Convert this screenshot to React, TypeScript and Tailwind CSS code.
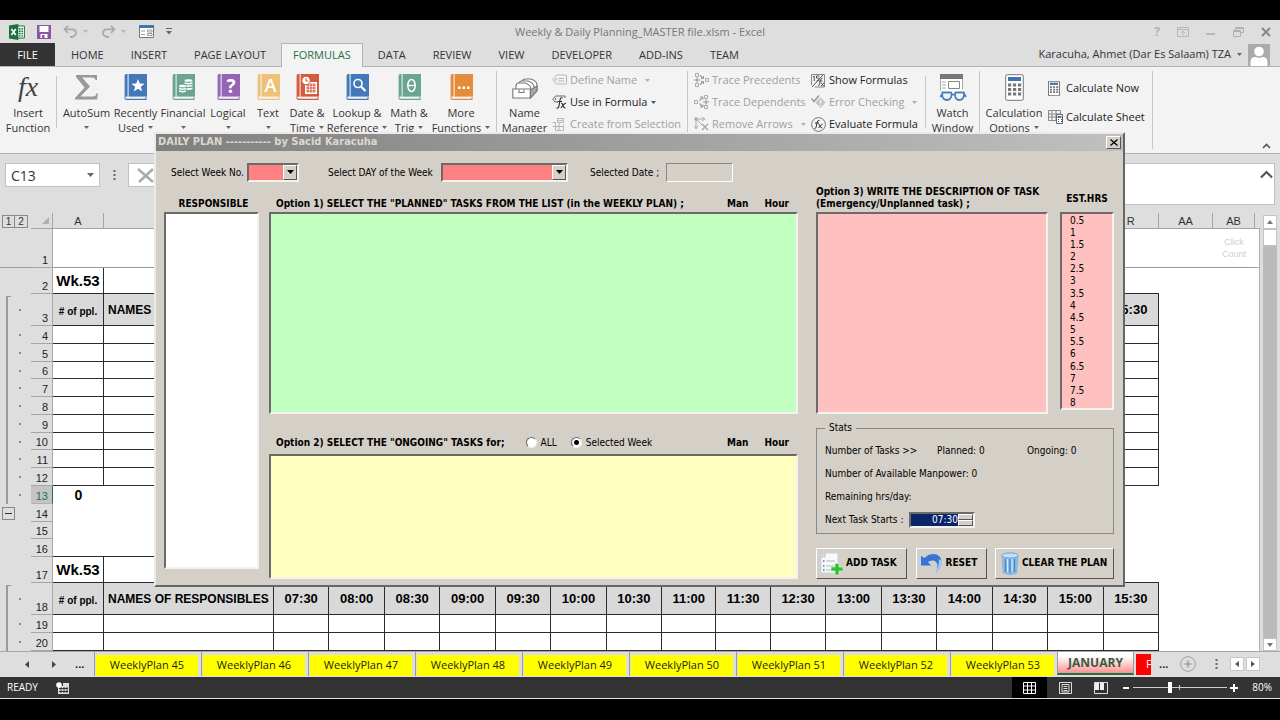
import React from 'react';

const FONT_UI = "font-['Open_Sans','Noto_Sans',sans-serif]";
const FONT_FORM = "font-['DejaVu_Sans_Condensed','DejaVu_Sans',sans-serif]";
const FONT_SHEET = "font-['Liberation_Sans',Arial,sans-serif]";

const TIMES = [
  '07:30', '08:00', '08:30', '09:00', '09:30', '10:00', '10:30', '11:00',
  '11:30', '12:30', '13:00', '13:30', '14:00', '14:30', '15:00', '15:30',
];
const TIME_COLUMNS = 'CDEFGHIJKLMNOPQR'.split('');
const HOURS = ['0.5', '1', '1.5', '2', '2.5', '3', '3.5', '4', '4.5', '5', '5.5', '6', '6.5', '7', '7.5', '8'];
const RIBBON_TABS = ['HOME', 'INSERT', 'PAGE LAYOUT', 'FORMULAS', 'DATA', 'REVIEW', 'VIEW', 'DEVELOPER', 'ADD-INS', 'TEAM'];
const SHEET_TABS = [45, 46, 47, 48, 49, 50, 51, 52, 53];

type RowKind = 'top' | 'week' | 'head' | 'body' | 'total' | 'blank' | 'last';
type SheetRow = { n: number; kind: RowKind; height: string; outline?: 'start' | 'line' | 'end' };

const ROWS: SheetRow[] = [
  { n: 1, kind: 'top', height: 'h-[39px]' },
  { n: 2, kind: 'week', height: 'h-[26px]' },
  { n: 3, kind: 'head', height: 'h-[32px]', outline: 'start' },
  { n: 4, kind: 'body', height: 'h-[18px]', outline: 'line' },
  { n: 5, kind: 'body', height: 'h-[18px]', outline: 'line' },
  { n: 6, kind: 'body', height: 'h-[17px]', outline: 'line' },
  { n: 7, kind: 'body', height: 'h-[18px]', outline: 'line' },
  { n: 8, kind: 'body', height: 'h-[18px]', outline: 'line' },
  { n: 9, kind: 'body', height: 'h-[18px]', outline: 'line' },
  { n: 10, kind: 'body', height: 'h-[17px]', outline: 'line' },
  { n: 11, kind: 'body', height: 'h-[18px]', outline: 'line' },
  { n: 12, kind: 'body', height: 'h-[18px]', outline: 'line' },
  { n: 13, kind: 'total', height: 'h-[18px]', outline: 'line' },
  { n: 14, kind: 'blank', height: 'h-[18px]', outline: 'end' },
  { n: 15, kind: 'blank', height: 'h-[17px]' },
  { n: 16, kind: 'last', height: 'h-[18px]' },
  { n: 17, kind: 'week', height: 'h-[26px]' },
  { n: 18, kind: 'head', height: 'h-[32px]', outline: 'start' },
  { n: 19, kind: 'body', height: 'h-[18px]', outline: 'line' },
  { n: 20, kind: 'body', height: 'h-[18px]', outline: 'line' },
];

/* ---------- icons ---------- */

function Caret({ className = 'fill-[#666]' }: { className?: string }) {
  return (
    <svg width="5" height="3" viewBox="0 0 5 3" className={`inline-block ${className}`} aria-hidden="true">
      <path d="M0 0h5L2.5 3z" />
    </svg>
  );
}

function BookIcon({ color, children }: { color: string; children: React.ReactNode }) {
  return (
    <svg width="23" height="26" viewBox="0 0 23 26" aria-hidden="true">
      <path d="M2 0h1.6v22.6H2.6Q1 22.8.6 24V1.6Q.8.2 2 0z" fill={color} />
      <path d="M4.6 0H23v22.6H4.6z" fill={color} />
      <path d="M.7 23.6Q1 25.4 2.8 25.4H22V23" fill="none" stroke={color} strokeWidth="1.1" />
      {children}
    </svg>
  );
}

function ExcelIcon() {
  return (
    <svg width="16" height="16" viewBox="0 0 16 16" aria-hidden="true">
      <path d="M8 2h7.4v12H8z" fill="#fff" stroke="#1e7145" />
      <path d="M10 4h1.6v1.5H10zM12.4 4H14v1.5h-1.6zM10 6.4h1.6v1.5H10zM12.4 6.4H14v1.5h-1.6zM10 8.8h1.6v1.5H10zM12.4 8.8H14v1.5h-1.6zM10 11.2h1.6v1.4H10zM12.4 11.2H14v1.4h-1.6z" fill="#1e7145" />
      <path d="M0 1.6 9.4 0v16L0 14.4z" fill="#1e7145" />
      <path d="m2.4 5 4.4 6M6.8 5l-4.4 6" stroke="#fff" strokeWidth="1.6" />
    </svg>
  );
}

function NameManagerIcon() {
  return (
    <svg width="26" height="21" viewBox="0 0 26 21" fill="#fff" stroke="#777" strokeWidth="1.1" aria-hidden="true">
      <path d="M10 8V5q0-4 4-4h5q6 2 6 6v5l-5 5z" />
      <path d="M7 9V6q0-3 3-3h6q6 2 6 6v6l-3 3z" />
      <path d="M4 11V8q0-3 3-3h6q6 2 6 6v3" />
      <path d="M.8 11h17.6v9H.8z" />
      <path d="M18.4 20 25 13V8l-6.600 4z" fill="#aaa" />
      <path d="M7 11.5v3h5v-3" fill="none" />
    </svg>
  );
}

function WatchIcon() {
  return (
    <svg width="28" height="28" viewBox="0 0 28 28" fill="none" aria-hidden="true">
      <path d="M1.5.5h22v16h-22z" fill="#fff" stroke="#aaa" />
      <path d="M1 0h23v5H1z" fill="#777" />
      <path d="M9.5 7.5h11v7h-11z" stroke="#888" />
      <path d="M3 8h4M3 11h4M3 14h4" stroke="#aaa" />
      <path d="M2 18h10l2 2 2-2h10" stroke="#fff" strokeWidth="5" />
      <path d="M3.4 18.5h8.400q1 0 .8 2-.4 5.5-4.8 5.5t-4.6-5.5zM16.4 18.5h8.4l.2 2q-.4 5.5-4.6 5.5T16 20.5zM12.6 20.6h3.2M3.4 19.5 1.4 23M25 19.5l2 3.5" stroke="#4a7ebb" strokeWidth="1.8" />
    </svg>
  );
}

function CalculatorIcon({ large = false }: { large?: boolean }) {
  return (
    <svg width={large ? 19 : 12} height={large ? 27 : 15} viewBox="0 0 19 27" preserveAspectRatio="none" aria-hidden="true">
      <rect x=".7" y=".7" width="17.6" height="25.6" rx="1.5" fill="#fff" stroke="#777" strokeWidth={large ? 1 : 1.7} />
      <path d="M3 3h13v4H3z" fill="#4472ac" />
      <path d="M3 9.5h3.2v3H3zm5 0h3.2v3H8zm5 0h3.2v3H13zM3 14h3.2v3H3zm5 0h3.2v3H8zm5 0h3.2v3H13zM3 18.5h3.2v3H3zm5 0h3.2v3H8zm5 0h3.2v3H13z" fill="#777" />
    </svg>
  );
}

function CalcSheetIcon() {
  return (
    <svg width="15" height="14" viewBox="0 0 15 14" fill="none" aria-hidden="true">
      <path d="M.5.5h12v10H.5zM.5 4h12M.5 7h12M4 .5v10M8 .5v10" stroke="#888" />
      <path d="M8.5 4.5h6v9h-6z" fill="#fff" stroke="#666" />
      <path d="M9.5 6h4v2h-4z" fill="#4472ac" />
      <path d="M10 9.5h1m2 0h1m-4 2h1m2 0h1" stroke="#555" />
    </svg>
  );
}

function TagIcon() {
  return (
    <svg width="15" height="12" viewBox="0 0 15 12" fill="none" stroke="#b4b4b4" aria-hidden="true">
      <path d="M4.5 1h9q1 0 1 1v7q0 1-1 1h-9L.7 5.5zM6.5 4.500H12M6.5 7H12" />
      <circle cx="4" cy="5.5" r=".8" />
    </svg>
  );
}

function TagFxIcon() {
  return (
    <svg width="15" height="14" viewBox="0 0 15 14" fill="none" stroke="#666" aria-hidden="true">
      <path d="M6 7H3L.7 4.2 3.500 1H13v2" />
      <circle cx="3.5" cy="4" r=".6" />
      <path d="M10.5 3q-2-1-2.500 2l-1 6q-.5 2.500-2.500 2M5.5 6.500H10M9 8q1.500 0 2 2.500t2.500 2.500M14 8q-2 .5-5 5" strokeWidth="1.2" stroke="#333" />
    </svg>
  );
}

function SelectionIcon() {
  return (
    <svg width="14" height="13" viewBox="0 0 14 13" fill="none" stroke="#b4b4b4" aria-hidden="true">
      <path d="M5.5.5h6v4h-6zM.5 4.5h3v8h8v-6M.5 8.500h11M7 5v7.500M6.500 2.500h4" />
    </svg>
  );
}

function TracePrecedentsIcon() {
  return (
    <svg width="15" height="14" viewBox="0 0 15 14" fill="none" stroke="#aaa" aria-hidden="true">
      <path d="M1.5.5h3v3h-3zM1.5 10.5h3v3h-3zM11.500 5.500h3v3h-3z" />
      <path d="M0 7h6M3 4.500v5M6 2.500l3 2.500M6 11.500l3-2.500" stroke="#999" strokeWidth="1.2" />
      <path d="M9.500 3v2.500H7M9.500 11V8.500H7" stroke="#999" />
    </svg>
  );
}

function TraceDependentsIcon() {
  return (
    <svg width="15" height="14" viewBox="0 0 15 14" fill="none" stroke="#aaa" aria-hidden="true">
      <path d="M.5 5.500h3v3h-3zM10.500.500h3v3h-3zM10.500 10.500h3v3h-3z" />
      <path d="M9 7h6M12 4.500v5M5.500 5.500l3-3M5.500 8.500l3 3" stroke="#999" strokeWidth="1.2" />
      <path d="M6 2h3v2.500M6 12h3V9.500" stroke="#999" />
    </svg>
  );
}

function RemoveArrowsIcon() {
  return (
    <svg width="15" height="14" viewBox="0 0 15 14" fill="none" stroke="#aaa" aria-hidden="true">
      <path d="M2 2h8M2 2v9M2 2l6 6M8 0l3 2-3 2M.5 9 2 12l2-3" />
      <circle cx="2" cy="2" r="1.3" fill="#aaa" />
      <path d="m8 7 6 6M14 7l-6 6" strokeWidth="1.5" />
    </svg>
  );
}

function ShowFormulasIcon() {
  return (
    <svg width="15" height="15" viewBox="0 0 15 15" fill="none" stroke="#555" aria-hidden="true">
      <path d="M.5 12V1.5h13V14H4" stroke="#888" />
      <path d="M2 4l1.2-1v5M8.5 3h-3v2q2.500-.5 2.500 1.200T5.500 8M1 14 12 2M11.500 5.500q-1.500-.5-2 1.500l-1 4q-.5 2-1.500 1.500M8 8h3.500M10 9.500l3 4M13 9.500l-3 4" />
    </svg>
  );
}

function ErrorCheckIcon() {
  return (
    <svg width="15" height="14" viewBox="0 0 15 14" aria-hidden="true">
      <path d="M9.5 2.500 14.5 7.500 9.5 13 4.500 7.500z" fill="#c4c4c4" />
      <path d="M9.5 5v3.500M9.5 10v1.200" stroke="#fff" strokeWidth="1.4" />
      <path d="m.5 3.500 2.500 3L8 .5" fill="none" stroke="#999" strokeWidth="1.5" />
    </svg>
  );
}

function EvaluateIcon() {
  return (
    <svg width="15" height="15" viewBox="0 0 15 15" fill="none" stroke="#333" aria-hidden="true">
      <circle cx="7.5" cy="7.5" r="6.9" stroke="#777" />
      <path d="M8.5 3.500q-1.800-.5-2.300 1.500l-1 5q-.4 1.700-1.700 1.500M4 6h4M7.500 7q1 0 1.500 2t2.300 2M11.500 7q-1.500.5-4 4" />
    </svg>
  );
}

function PersonIcon() {
  return (
    <svg width="22" height="22" viewBox="0 0 22 22" aria-hidden="true">
      <path d="M0 0h22v22H0z" fill="#ababab" />
      <circle cx="11" cy="7.5" r="4.8" fill="#fff" />
      <path d="M2.5 22v-4q0-5 5-5l3.500 1 3.500-1q5 0 5 5v4z" fill="#fff" />
    </svg>
  );
}

/* ---------- ribbon ---------- */

function BigButton({ width, icon, lines, caret = false }: { width: string; icon: React.ReactNode; lines: string[]; caret?: boolean }) {
  return (
    <button type="button" className={`${width} flex shrink-0 flex-col items-center whitespace-nowrap leading-[15px]`}>
      <span className="flex h-[31px] items-start justify-center">{icon}</span>
      <span>{lines[0]}</span>
      <span className="flex h-[15px] items-center gap-1">
        {lines[1]}
        {caret && <Caret />}
      </span>
    </button>
  );
}

function SmallButton({ icon, label, muted = false, caret = false }: { icon: React.ReactNode; label: string; muted?: boolean; caret?: boolean }) {
  return (
    <button type="button" className={`flex h-[18px] items-center whitespace-nowrap ${muted ? 'text-[#a0a0a0]' : 'text-[#222]'}`}>
      <span className="flex w-[18px] shrink-0 items-center">{icon}</span>
      {label}
      {caret && <span className={`flex ${muted ? 'ml-2' : 'ml-1'}`}><Caret className={muted ? 'fill-[#b0b0b0]' : 'fill-[#555]'} /></span>}
    </button>
  );
}

function Divider({ tall = false }: { tall?: boolean }) {
  return <div className={`w-px shrink-0 bg-[#c6c6c6] ${tall ? 'h-[78px]' : 'mt-[2px] h-[52px]'}`} />;
}

function TitleBar() {
  return (
    <header className="flex h-[23px] items-center bg-[#dedede] pl-[9px] pr-[9px] text-[#777]">
      <div className="flex flex-1 items-center">
        <ExcelIcon />
        <button type="button" aria-label="Save" className="ml-3">
          <svg width="14" height="14" viewBox="0 0 14 14" aria-hidden="true">
            <path d="M0 0h14v14H0z" fill="#8659a5" />
            <path d="M2.5 1h9v6h-9zM3.5 9h7v4h-7z" fill="#fff" />
            <path d="M5 10h2.5v3H5z" fill="#8659a5" />
          </svg>
        </button>
        <button type="button" aria-label="Undo" className="ml-3 flex items-center gap-[5px]">
          <svg width="15" height="13" viewBox="0 0 15 13" fill="none" stroke="#aaa" strokeWidth="1.8" aria-hidden="true">
            <path d="M5 .8 1.5 4.300 5 7.800M1.500 4.300H9q4 .2 4 3.500T9 12H7" />
          </svg>
          <Caret className="fill-[#b5b5b5]" />
        </button>
        <button type="button" aria-label="Redo" className="ml-[13px] flex items-center gap-[5px]">
          <svg width="15" height="13" viewBox="0 0 15 13" fill="none" stroke="#aaa" strokeWidth="1.8" aria-hidden="true">
            <path d="m10 .8 3.500 3.500L10 7.800M13.500 4.300H6q-4 .2-4 3.500T6 12h2" />
          </svg>
          <Caret className="fill-[#b5b5b5]" />
        </button>
        <button type="button" aria-label="Form" className="ml-[13px]">
          <svg width="15" height="13" viewBox="0 0 15 13" aria-hidden="true">
            <path d="M.5.5h14v12H.5z" fill="#fff" stroke="#777" />
            <path d="M0 0h15v3H0z" fill="#4472ac" />
            <path d="M2 6h4M2 9.500h4M8.500 5h4.500v2H8.500zM8.500 8.500h4.500v2H8.500z" fill="none" stroke="#999" />
          </svg>
        </button>
        <button type="button" aria-label="Customize toolbar" className="ml-3">
          <svg width="6" height="7" viewBox="0 0 6 7" fill="#666" aria-hidden="true">
            <path d="M0 0h6v1H0zM0 3h6L3 6.500z" />
          </svg>
        </button>
      </div>
      <h1 className="whitespace-nowrap pt-px text-[11px]">Weekly &amp; Daily Planning_MASTER file.xlsm - Excel</h1>
      <div className="flex flex-1 items-center justify-end gap-[17px] text-[#b0b0b0]">
        <button type="button" aria-label="Help" className="text-[12px] font-bold leading-4">?</button>
        <button type="button" aria-label="Ribbon display options">
          <svg width="12" height="10" viewBox="0 0 12 10" fill="none" stroke="#b8b8b8" aria-hidden="true">
            <path d="M.5.5h11v9H.5zM.5 2.500h11M6 8.500v-4M4 6l2-2 2 2" />
          </svg>
        </button>
        <button type="button" aria-label="Minimize">
          <svg width="10" height="10" viewBox="0 0 10 10" aria-hidden="true"><path d="M0 6h9v2H0z" fill="#b8b8b8" /></svg>
        </button>
        <button type="button" aria-label="Restore">
          <svg width="11" height="10" viewBox="0 0 11 10" fill="none" stroke="#b0b0b0" aria-hidden="true">
            <path d="M2.5 3V.5h8v5H8M.5 3.500h7v6h-7zM.5 4.500h7M2.500 1.500h8" />
          </svg>
        </button>
        <button type="button" aria-label="Close">
          <svg width="10" height="10" viewBox="0 0 10 10" stroke="#888" strokeWidth="2" aria-hidden="true"><path d="m1 1 8 8M9 1 1 9" /></svg>
        </button>
      </div>
    </header>
  );
}

function RibbonTabs() {
  return (
    <nav className="flex h-6 items-stretch border-b border-[#b4b4b4] bg-[#dedede] text-[11px] text-[#333]">
      <button type="button" className="mr-1 w-[55px] bg-[#333] pt-px text-white">FILE</button>
      <div className="flex gap-[3px]">
        {RIBBON_TABS.map((tab) => (
          <button
            type="button"
            key={tab}
            className={
              tab === 'FORMULAS'
                ? '-mb-px whitespace-nowrap border border-b-0 border-[#b4b4b4] bg-[#f3f3f3] px-[11px] text-[#1e7145]'
                : 'whitespace-nowrap px-3 pt-[2px]'
            }
          >
            {tab}
          </button>
        ))}
      </div>
      <div className="ml-auto flex items-center gap-[6px] whitespace-nowrap pr-[10px]">
        <span>Karacuha, Ahmet (Dar Es Salaam) TZA</span>
        <Caret />
        <PersonIcon />
      </div>
    </nav>
  );
}

function Ribbon() {
  return (
    <section className="flex h-[87px] items-start border-b border-[#b4b4b4] bg-[#f3f3f3] pt-1 text-[11px] text-[#333]">
      <div className="flex pt-[3px]">
        <BigButton width="w-[56px]" lines={['Insert', 'Function']} icon={<span className="font-['Liberation_Serif',serif] text-[28px] italic leading-[26px] text-[#444]">fx</span>} />
        <Divider />
        <div className="w-[5px]" />
        <BigButton width="w-[49px]" caret lines={['AutoSum']} icon={
          <svg width="23" height="26" viewBox="0 0 23 26" aria-hidden="true">
            <path d="M1 1h21v5h-1.500Q20 3.500 17 3.500H7l8 9-9.500 10H18q3 0 3.500-3H23l-1 6H0v-1.500L9.500 13.500 1 3z" fill="#999" />
          </svg>
        } />
        <BigButton width="w-[49px]" caret lines={['Recently', 'Used']} icon={
          <BookIcon color="#4479b8"><path d="m14 5 1.800 4.500 4.800.2-3.800 3 1.400 4.700L14 14.700l-4.200 2.700 1.400-4.700-3.800-3 4.800-.2z" fill="#fff" /></BookIcon>
        } />
        <BigButton width="w-[46px]" caret lines={['Financial']} icon={
          <BookIcon color="#6ba591">
            <g fill="#fff">
              <ellipse cx="16.5" cy="6.5" rx="4" ry="1.3" />
              <path d="M12.500 8q4 2 8 0v1.500q-4 2-8 0zM14.500 11q3 1 6-.5V12q-3 1.500-6 .8zM14.500 14q3 .8 6-.5V15q-3 1.500-6 .8z" />
              <ellipse cx="10.5" cy="12" rx="3.5" ry="1.3" />
              <path d="M7 13.500q3.500 2 7 0V15q-3.500 2-7 0zM7 16q3.500 2 7 0v1.500q-3.500 2-7 0z" />
            </g>
          </BookIcon>
        } />
        <BigButton width="w-[44px]" caret lines={['Logical']} icon={
          <BookIcon color="#9564b5"><text x="14" y="18.5" fontSize="19" fontWeight="700" fill="#fff" textAnchor="middle">?</text></BookIcon>
        } />
        <BigButton width="w-[36px]" caret lines={['Text']} icon={
          <BookIcon color="#eec177"><text x="13.5" y="18" fontSize="18" fontWeight="600" fill="#fff" textAnchor="middle">A</text></BookIcon>
        } />
        <BigButton width="w-[42px]" caret lines={['Date &', 'Time']} icon={
          <BookIcon color="#d35b3f">
            <path d="M9 8h12v12H9z" fill="#fff" />
            <path d="M10 11h10M10 14h10M10 17h10M12 9v10M15 9v10M18 9v10" stroke="#d35b3f" />
            <circle cx="10" cy="6.5" r="4.2" fill="#fff" stroke="#d35b3f" />
            <path d="M10 4v3h2" stroke="#d35b3f" fill="none" />
          </BookIcon>
        } />
        <BigButton width="w-[58px]" caret lines={['Lookup &', 'Reference']} icon={
          <BookIcon color="#4479b8">
            <circle cx="12" cy="9.5" r="4" fill="none" stroke="#fff" strokeWidth="1.6" />
            <path d="m15 12.500 4.500 4.500" stroke="#fff" strokeWidth="2.2" />
          </BookIcon>
        } />
        <BigButton width="w-[46px]" caret lines={['Math &', 'Trig']} icon={
          <BookIcon color="#6ba591">
            <ellipse cx="13.5" cy="11.5" rx="3.7" ry="6" fill="none" stroke="#fff" strokeWidth="1.5" />
            <path d="M10 11.500h7" stroke="#fff" strokeWidth="1.3" />
          </BookIcon>
        } />
        <BigButton width="w-[58px]" caret lines={['More', 'Functions']} icon={
          <BookIcon color="#e58b3c"><path d="M8 12.500h2.500V15H8zM12.500 12.500H15V15h-2.500zM17 12.500h2.500V15H17z" fill="#fff" /></BookIcon>
        } />
        <div className="w-[6px]" />
      </div>
      <Divider tall />
      <div className="flex">
        <div className="pt-[3px]">
          <BigButton width="w-[55px]" lines={['Name', 'Manager']} icon={<span className="pt-1"><NameManagerIcon /></span>} />
        </div>
        <div className="flex w-[135px] flex-col gap-1">
          <SmallButton muted caret icon={<TagIcon />} label="Define Name" />
          <SmallButton caret icon={<TagFxIcon />} label="Use in Formula" />
          <SmallButton muted icon={<SelectionIcon />} label="Create from Selection" />
        </div>
      </div>
      <Divider tall />
      <div className="flex pl-[6px]">
        <div className="flex w-[117px] flex-col gap-1">
          <SmallButton muted icon={<TracePrecedentsIcon />} label="Trace Precedents" />
          <SmallButton muted icon={<TraceDependentsIcon />} label="Trace Dependents" />
          <SmallButton muted caret icon={<RemoveArrowsIcon />} label="Remove Arrows" />
        </div>
        <div className="flex w-[114px] flex-col gap-1">
          <SmallButton icon={<ShowFormulasIcon />} label="Show Formulas" />
          <SmallButton muted caret icon={<ErrorCheckIcon />} label="Error Checking" />
          <SmallButton icon={<EvaluateIcon />} label="Evaluate Formula" />
        </div>
      </div>
      <div className="flex pt-[3px]">
        <Divider />
        <BigButton width="w-[53px]" lines={['Watch', 'Window']} icon={<WatchIcon />} />
      </div>
      <Divider tall />
      <div className="flex pt-[3px]">
        <BigButton width="w-[68px]" caret lines={['Calculation', 'Options']} icon={<CalculatorIcon large />} />
        <div className="flex w-[104px] flex-col gap-[11px] pt-[5px]">
          <SmallButton icon={<CalculatorIcon />} label="Calculate Now" />
          <SmallButton icon={<CalcSheetIcon />} label="Calculate Sheet" />
        </div>
      </div>
      <Divider tall />
      <button type="button" aria-label="Collapse the ribbon" className="ml-auto mr-[9px] self-end pb-1">
        <svg width="9" height="6" viewBox="0 0 9 6" fill="none" stroke="#555" strokeWidth="1.6" aria-hidden="true"><path d="M1 5 4.500 1.500 8 5" /></svg>
      </button>
    </section>
  );
}

function FormulaBar() {
  return (
    <section className="flex h-[59px] items-start bg-[#dedede] pl-[5px] pr-[5px] pt-[9px]">
      <div className="flex h-6 w-[95px] items-center border border-[#c0c0c0] bg-white pr-[5px]">
        <input aria-label="Name box" defaultValue="C13" className="w-full min-w-0 bg-transparent pl-[5px] text-[14px] text-[#333] outline-none" />
        <svg width="7" height="4" viewBox="0 0 7 4" className="shrink-0 fill-[#666]" aria-hidden="true"><path d="M0 0h7L3.500 4z" /></svg>
      </div>
      <svg width="3" height="10" viewBox="0 0 3 10" className="ml-[13px] mt-[7px] fill-[#666]" aria-hidden="true"><path d="M.5 0h2v2h-2zM.5 4h2v2h-2zM.5 8h2v2h-2z" /></svg>
      <div className="ml-3 h-6 w-[90px] border border-[#c0c0c0] bg-white px-2 py-1">
        <svg width="17" height="15" viewBox="0 0 17 15" stroke="#aaa" strokeWidth="2.5" aria-hidden="true"><path d="m1 1 15 13M16 1 2 14" /></svg>
      </div>
      <div className="ml-1 flex h-[42px] flex-1 items-start border border-[#c0c0c0] bg-white pr-px pt-[6px]">
        <input aria-label="Formula bar" className="min-w-0 flex-1 bg-transparent outline-none" />
        <svg width="13" height="9" viewBox="0 0 13 9" fill="none" stroke="#555" strokeWidth="2.2" aria-hidden="true"><path d="m1 7.500 5.500-5.500L12 7.500" /></svg>
      </div>
    </section>
  );
}

/* ---------- worksheet ---------- */

function OutlineCell({ outline }: { outline?: SheetRow['outline'] }) {
  if (outline === 'end') {
    return (
      <button type="button" aria-label="Collapse rows" className="ml-[2px] flex h-[13px] w-[13px] items-center justify-center border border-[#888]">
        <span className="h-px w-[7px] bg-[#333]" />
      </button>
    );
  }
  if (!outline) return null;
  return (
    <div className="flex h-full items-center">
      <div className={`ml-[6px] w-[5px] self-stretch border-l-2 border-[#9a9a9a] ${outline === 'start' ? 'mt-[2px] border-t' : ''}`} />
      <span className="ml-2 h-[2px] w-[2px] bg-[#888]" />
    </div>
  );
}

function SheetRowView({ row }: { row: SheetRow }) {
  const { n, kind, height, outline } = row;
  const grid = kind === 'head' || kind === 'body';
  const fill = kind === 'head' ? 'bg-[#d9d9d9]' : 'bg-white';
  const line = 'border-[#2b2b2b]';
  let cell = '';
  let side = '';
  if (grid) {
    cell = `border-b border-r ${line}`;
    side = cell;
  } else if (kind === 'week') {
    cell = `border-b ${line}`;
    side = `border-b border-r ${line}`;
  } else if (kind === 'top') {
    cell = 'border-b border-[#9a9a9a]';
    side = cell;
  } else if (kind === 'last') {
    side = `border-b ${line}`;
  }
  const topLine = kind === 'top' ? 'border-b border-[#9a9a9a]' : '';

  return (
    <tr className={height}>
      <td className={`bg-[#dedede] p-0 ${height} ${topLine}`}><OutlineCell outline={outline} /></td>
      <th
        scope="row"
        className={`border-b border-r p-0 pr-1 text-right align-bottom text-[11px] font-normal leading-[13px] ${
          n === 13 ? 'border-b-[#b0b0b0] border-r-[#217346] bg-[#c3c3c3] text-[#217346]' : 'border-[#a6a6a6] bg-[#dedede] text-[#222]'
        }`}
      >
        {n}
      </th>
      <td className={`p-0 text-center font-bold ${fill} ${side}`}>
        {kind === 'week' && <span className="block text-[15px] leading-4">Wk.53</span>}
        {kind === 'head' && <span className="text-[10px]"># of ppl.</span>}
        {kind === 'total' && <span className="block text-[14px] leading-4">0</span>}
      </td>
      <td className={`whitespace-nowrap p-0 pl-1 text-[12px] font-bold ${fill} ${kind === 'week' ? cell : side}`}>
        {kind === 'head' && 'NAMES OF RESPONSIBLES'}
      </td>
      {TIMES.map((time) => (
        <td key={time} className={`p-0 text-center text-[13px] font-bold ${fill} ${cell}`}>
          {kind === 'head' && time}
        </td>
      ))}
      <td className={`bg-white p-0 ${topLine}`} />
      <td className={`bg-white p-0 text-center text-[9px] leading-3 text-[#cfcfcf] ${topLine}`}>{kind === 'top' && 'Click Count'}</td>
      <td className={`border-r border-[#b0b0b0] bg-white p-0 ${kind === 'top' ? 'border-b' : ''}`} />
    </tr>
  );
}

function Worksheet() {
  const head = 'border-b border-r border-[#a6a6a6] p-0 font-normal';
  return (
    <section className={`flex bg-[#dedede] ${FONT_SHEET}`}>
      <table className="min-w-0 flex-1 table-fixed border-separate border-spacing-0 text-black">
        <colgroup>
          <col className="w-[31px]" />
          <col className="w-[22px]" />
          <col className="w-[51px]" />
          <col className="w-[170px]" />
          {TIME_COLUMNS.map((c) => <col key={c} />)}
          <col className="w-[54px]" />
          <col className="w-[42px]" />
          <col className="w-[5px]" />
        </colgroup>
        <thead>
          <tr className="h-4 text-[11px] leading-[14px] text-[#333]">
            <th className="p-0 font-normal">
              <div className="ml-[2px] flex text-[10px] leading-[11px]">
                <button type="button" className="h-[13px] w-[13px] border border-[#888]">1</button>
                <button type="button" className="h-[13px] w-[13px] border border-l-0 border-[#888]">2</button>
              </div>
            </th>
            <th className={head}>
              <svg width="7" height="7" viewBox="0 0 7 7" className="ml-auto mr-[3px] fill-[#b0b0b0]" aria-hidden="true"><path d="M7 0v7H0z" /></svg>
            </th>
            <th className={head}>A</th>
            <th className={head}>B</th>
            {TIME_COLUMNS.map((c) => <th key={c} className={head}>{c}</th>)}
            <th className={head}>AA</th>
            <th className={head}>AB</th>
            <th className="border-b border-[#a6a6a6] p-0" />
          </tr>
        </thead>
        <tbody>
          {ROWS.map((row) => <SheetRowView key={row.n} row={row} />)}
        </tbody>
      </table>
      <div className="flex w-5 flex-col pl-[3px] pr-[3px] pt-[2px]">
        <button type="button" aria-label="Scroll up" className="flex h-[14px] items-center justify-center border border-[#c4c4c4] bg-white">
          <svg width="6" height="4" viewBox="0 0 6 4" className="fill-[#777]" aria-hidden="true"><path d="M0 4h6L3 0z" /></svg>
        </button>
        <div className="flex-1 bg-[#bababa]">
          <div className="h-[17px] border border-[#c4c4c4] bg-white" />
        </div>
        <button type="button" aria-label="Scroll down" className="flex h-[13px] items-center justify-center border border-[#c4c4c4] bg-white">
          <svg width="6" height="4" viewBox="0 0 6 4" className="fill-[#777]" aria-hidden="true"><path d="M0 0h6L3 4z" /></svg>
        </button>
      </div>
    </section>
  );
}

function SheetTabs() {
  const arrow = 'flex h-[14px] w-[14px] items-center justify-center border border-[#c4c4c4] bg-white';
  return (
    <nav className="flex h-[26px] items-start border-t border-[#a6a6a6] bg-[#dedede] pr-5 text-[11px] text-[#222]">
      <div className="flex h-6 w-[94px] shrink-0 items-center">
        <svg width="4" height="7" viewBox="0 0 4 7" className="ml-[25px] fill-[#444]" aria-hidden="true"><path d="M4 0v7L0 3.500z" /></svg>
        <svg width="4" height="7" viewBox="0 0 4 7" className="ml-[23px] fill-[#444]" aria-hidden="true"><path d="M0 0v7l4-3.500z" /></svg>
        <span className="ml-[19px] font-bold">...</span>
      </div>
      {SHEET_TABS.map((week) => (
        <div key={week} className="flex h-6 w-[107px] items-center border-l border-[#999] pl-px pr-[3px] pt-[2px]">
          <button type="button" className="h-[21px] w-full whitespace-nowrap bg-[#ffff00]">WeeklyPlan {week}</button>
        </div>
      ))}
      <button type="button" className="h-[23px] w-[77px] border-x border-b-2 border-x-[#999] border-b-[#217346] bg-gradient-to-b from-white from-20% to-[#ff9090] pt-px text-[12px] font-bold text-[#355c44]">JANUARY</button>
      <button type="button" className="ml-[2px] mt-[2px] h-[21px] w-[15px] overflow-hidden bg-[#ff0000] pl-[10px] text-left text-white">F</button>
      <span className="ml-2 font-bold leading-6">...</span>
      <button type="button" aria-label="New sheet" className="ml-3 mt-1">
        <svg width="16" height="16" viewBox="0 0 16 16" fill="none" stroke="#a0a0a0" aria-hidden="true">
          <circle cx="8" cy="8" r="7.3" />
          <path d="M8 4.500v7M4.500 8h7" strokeWidth="1.6" />
        </svg>
      </button>
      <div className="ml-auto mt-[5px] flex items-center">
        <svg width="3" height="10" viewBox="0 0 3 10" className="mr-3 fill-[#666]" aria-hidden="true"><path d="M.5 0h2v2h-2zM.5 4h2v2h-2zM.5 8h2v2h-2z" /></svg>
        <button type="button" aria-label="Scroll left" className={arrow}>
          <svg width="4" height="6" viewBox="0 0 4 6" className="fill-[#555]" aria-hidden="true"><path d="M4 0v6L0 3z" /></svg>
        </button>
        <button type="button" aria-label="Scroll right" className={`${arrow} ml-[2px]`}>
          <svg width="4" height="6" viewBox="0 0 4 6" className="fill-[#555]" aria-hidden="true"><path d="M0 0v6l4-3z" /></svg>
        </button>
      </div>
    </nav>
  );
}

function StatusBar() {
  return (
    <footer className="flex h-[22px] items-center border-b border-[#ddd] bg-[#333] pl-[7px] pr-2 text-[10px] text-white">
      <span>READY</span>
      <svg width="13" height="12" viewBox="0 0 13 12" className="ml-[18px]" aria-hidden="true">
        <path d="M2 4h11v8H2zM7 1h6v3H7z" fill="#ddd" />
        <path d="M3 6.500h9M3 9.500h9M5 5v6M8 5v6M11 5v6" stroke="#333" />
        <circle cx="3" cy="3" r="2.8" fill="#fff" />
      </svg>
      <div className="ml-auto flex h-full items-center">
        <button type="button" aria-label="Normal view" className="flex h-full w-[35px] items-center justify-center bg-black">
          <svg width="13" height="12" viewBox="0 0 13 12" fill="none" stroke="#fff" aria-hidden="true"><path d="M.5.5h12v11H.5zM.5 4h12M.5 8h12M4.500.5v11M8.500.5v11" /></svg>
        </button>
        <button type="button" aria-label="Page layout" className="ml-3">
          <svg width="13" height="12" viewBox="0 0 13 12" fill="none" stroke="#ddd" aria-hidden="true"><path d="M.5.5h12v11H.5zM3 2.500h7v7.500H3zM4.500 4.500h4M4.500 6.500h4M4.500 8.500h4" /></svg>
        </button>
        <button type="button" aria-label="Page break preview" className="ml-[22px]">
          <svg width="14" height="12" viewBox="0 0 14 12" aria-hidden="true"><path d="M.5.5h13v11H.5z" fill="none" stroke="#ddd" /><path d="M1 1h4v7H1zM6 1h4v7H6z" fill="#eee" /></svg>
        </button>
        <button type="button" aria-label="Zoom out" className="ml-[15px]">
          <svg width="7" height="8" viewBox="0 0 7 8" aria-hidden="true"><path d="M0 3h6v2H0z" fill="#fff" /></svg>
        </button>
        <input
          type="range"
          aria-label="Zoom"
          min={0}
          max={100}
          defaultValue={39}
          className="mx-[3px] h-3 w-[94px] appearance-none bg-[linear-gradient(to_right,transparent_46px,#ccc_46px,#ccc_47px,transparent_47px)] bg-[length:100%_5px] bg-center bg-no-repeat [&::-webkit-slider-runnable-track]:h-px [&::-webkit-slider-runnable-track]:bg-[#ccc] [&::-webkit-slider-thumb]:-mt-[5px] [&::-webkit-slider-thumb]:h-[11px] [&::-webkit-slider-thumb]:w-1 [&::-webkit-slider-thumb]:appearance-none [&::-webkit-slider-thumb]:bg-white"
        />
        <button type="button" aria-label="Zoom in">
          <svg width="8" height="8" viewBox="0 0 8 8" aria-hidden="true"><path d="M0 3h3V0h2v3h3v2H5v3H3V5H0z" fill="#fff" /></svg>
        </button>
        <span className="ml-[14px]">80%</span>
      </div>
    </footer>
  );
}

/* ---------- daily plan form ---------- */

const SUNKEN = 'border-2 border-t-[#6b6b6b] border-l-[#6b6b6b] border-r-[#f4f2ee] border-b-[#f4f2ee]';
const RAISED = 'border border-t-white border-l-white border-r-[#555] border-b-[#555] bg-[#d4d0c8]';

function Combo({ id, label, width, gap }: { id: string; label: string; width: string; gap: string }) {
  return (
    <div className="flex items-center">
      <label htmlFor={id} className={gap}>{label}</label>
      <div className={`relative ${width}`}>
        <select id={id} className={`block h-[19px] w-full appearance-none bg-[#ff8080] ${SUNKEN}`} />
        <span className={`pointer-events-none absolute bottom-[2px] right-[2px] top-[2px] flex w-[14px] items-center justify-center ${RAISED}`}>
          <svg width="7" height="4" viewBox="0 0 7 4" aria-hidden="true"><path d="M0 0h7L3.500 4z" /></svg>
        </span>
      </div>
    </div>
  );
}

function FormButton({ width, icon, children }: { width: string; icon: React.ReactNode; children: string }) {
  return (
    <button type="button" className={`flex h-[31px] items-center whitespace-nowrap font-bold ${width} ${RAISED}`}>
      {icon}
      <span className="pb-[2px]">{children}</span>
    </button>
  );
}

function AddTaskIcon() {
  return (
    <svg width="23" height="24" viewBox="0 0 23 24" aria-hidden="true">
      <path d="M5 1h13v20H1V5z" fill="#f7f9fb" stroke="#c8d0d8" />
      <path d="M1 5h4V1" fill="#dfe5ea" stroke="#b8c2cc" />
      <path d="M6 9h9M6 14h9M6 18h6" stroke="#b0b8c0" />
      <path d="M3 9h1.500M3 14h1.500M3 18h1.500" stroke="#3a78c8" strokeWidth="1.5" />
      <path d="M15 11.500h4V15h4v4h-4v4h-4v-4h-4v-4h4z" fill="#2fc42f" stroke="#e6f7e6" strokeWidth=".6" />
    </svg>
  );
}

function ResetIcon() {
  return (
    <svg width="23" height="23" viewBox="0 0 23 23" aria-hidden="true">
      <path d="M.5 3v11H12L8.500 10q7-3 8.500 2.500.5 4.500-2 9.500 7.500-6 7-13Q20.500 1.500 13 1.500 8 1.500 4.500 5.500z" fill="#3b74d0" stroke="#cfe0f7" strokeWidth=".8" />
      <path d="M15 22q7.500-6 7-13-.5 0-3-2 0 9-4 15z" fill="#a8c8f0" />
    </svg>
  );
}

function TrashIcon() {
  return (
    <svg width="18" height="23" viewBox="0 0 18 23" aria-hidden="true">
      <path d="M1 4h16l-1.500 17q-6.500 3-13 0z" fill="#8fc0ec" stroke="#7fb2e0" />
      <path d="M4.500 7v13M9 7v14M13.500 7v13" stroke="#4a86c4" strokeWidth="1.5" />
      <path d="M6.500 7v13M11 7v13" stroke="#d5eafa" />
      <ellipse cx="9" cy="3.5" rx="8.3" ry="2.6" fill="#c3def5" stroke="#6aa3d8" />
    </svg>
  );
}

function DailyPlanDialog() {
  const radio = 'h-[11px] w-[11px] appearance-none rounded-full border border-b-[#eee] border-l-[#666] border-r-[#eee] border-t-[#666] bg-white checked:bg-[radial-gradient(black_2px,white_3px)]';
  return (
    <div
      role="dialog"
      aria-labelledby="daily-plan-title"
      className={`absolute left-[154px] right-[155px] top-[132px] border-2 border-b-[#666] border-l-[#eceae6] border-r-[#666] border-t-[#eceae6] bg-[#d4cfc7] text-[10px] text-black ${FONT_FORM}`}
    >
      <div className="flex h-[17px] items-center justify-between bg-gradient-to-r from-[#808080] to-[#c0c0c0] pl-[2px] pr-[2px]">
        <h2 id="daily-plan-title" className="text-[11px] font-bold text-[#dcd8d0]">DAILY PLAN ----------- by Sacid Karacuha</h2>
        <button type="button" aria-label="Close form" className={`flex h-[13px] w-[15px] items-center justify-center ${RAISED}`}>
          <svg width="8" height="7" viewBox="0 0 8 7" stroke="#000" strokeWidth="1.3" aria-hidden="true"><path d="m.5.5 7 6M7.500.5l-7 6" /></svg>
        </button>
      </div>

      <div className="flex pb-[6px] pl-2 pr-[9px] pt-[11px]">
        <div className="flex min-w-0 flex-1 flex-col">
          <div className="flex h-5 items-center whitespace-nowrap pl-[7px]">
            <Combo id="week-no" label="Select Week No." width="w-[52px]" gap="w-[76px]" />
            <div className="w-[29px]" />
            <Combo id="week-day" label="Select DAY of the Week" width="w-[127px]" gap="w-[113px]" />
            <label htmlFor="selected-date" className="ml-[22px] w-[76px]">Selected Date ;</label>
            <input id="selected-date" readOnly className="h-[19px] w-[67px] border border-b-white border-l-[#888] border-r-white border-t-[#888] bg-transparent" />
          </div>

          <div className="flex gap-[10px]">
            <div className="flex w-[95px] flex-col">
              <h3 id="responsible" className="flex h-[30px] items-center justify-center pl-1 pt-3 font-bold">RESPONSIBLE</h3>
              <select size={4} aria-labelledby="responsible" className={`h-[357px] w-full bg-white ${SUNKEN}`} />
            </div>
            <div className="flex min-w-0 flex-1 flex-col">
              <div className="flex h-[30px] items-center whitespace-nowrap pl-[7px] pr-[9px] pt-3 font-bold">
                <h3 id="planned">Option 1) SELECT THE "PLANNED" TASKS FROM THE LIST (in the WEEKLY PLAN) ;</h3>
                <span className="ml-auto">Man</span>
                <span className="ml-4">Hour</span>
              </div>
              <select size={4} aria-labelledby="planned" className={`h-[202px] w-full bg-[#c0ffc0] ${SUNKEN}`} />
              <div className="flex h-10 items-center whitespace-nowrap pl-[7px] pr-[9px] pt-4">
                <h3 id="ongoing" className="font-bold">Option 2) SELECT THE "ONGOING" TASKS for;</h3>
                <label className="ml-[21px] flex items-center gap-1"><input type="radio" name="scope" className={radio} />ALL</label>
                <label className="ml-[14px] flex items-center gap-1"><input type="radio" name="scope" defaultChecked className={radio} />Selected Week</label>
                <span className="ml-auto font-bold">Man</span>
                <span className="ml-4 font-bold">Hour</span>
              </div>
              <select size={4} aria-labelledby="ongoing" className={`h-[125px] w-full bg-[#ffffc0] ${SUNKEN}`} />
            </div>
          </div>
        </div>

        <div className="ml-[18px] flex w-[298px] flex-col pt-[22px]">
          <div className="flex gap-3">
            <div className="w-[232px]">
              <label htmlFor="description" className="block h-[28px] whitespace-nowrap pt-[2px] font-bold leading-3">
                Option 3) WRITE THE DESCRIPTION OF TASK<br />(Emergency/Unplanned task) ;
              </label>
              <textarea id="description" className={`block h-[202px] w-full resize-none bg-[#ffc0c0] ${SUNKEN}`} />
            </div>
            <div className="w-[54px]">
              <label htmlFor="est-hrs" className="flex h-[28px] items-center justify-center font-bold">EST.HRS</label>
              <select id="est-hrs" size={16} className={`block h-[198px] w-full overflow-hidden bg-[#ffc0c0] p-0 pt-px ${SUNKEN}`}>
                {HOURS.map((h) => <option key={h} className="h-3 min-h-0 p-0 pl-2 leading-3 nth-[6n]:mb-px">{h}</option>)}
              </select>
            </div>
          </div>

          <fieldset className="mt-2 h-[112px] border border-[#888] pl-2 pt-px">
            <legend className="px-1 leading-3">Stats</legend>
            <div className="flex h-[23px] items-center pt-2">
              <span className="w-[112px]">Number of Tasks &gt;&gt;</span>
              <span className="w-[90px]">Planned: 0</span>
              <span>Ongoing: 0</span>
            </div>
            <p className="flex h-[23px] items-center pt-2">Number of Available Manpower: 0</p>
            <p className="flex h-[23px] items-center pt-2">Remaining hrs/day:</p>
            <div className="flex h-[23px] items-center pt-2">
              <label htmlFor="next-start" className="w-[84px] whitespace-nowrap">Next Task Starts :</label>
              <div className={`flex h-4 w-[66px] ${SUNKEN}`}>
                <input id="next-start" defaultValue="07:30" className="min-w-0 flex-1 bg-[#0a246a] text-right text-white outline-none" />
                <div className="flex w-[15px] flex-col">
                  <button type="button" aria-label="Later" className={`h-[6px] ${RAISED}`} />
                  <button type="button" aria-label="Earlier" className={`h-[6px] ${RAISED}`} />
                </div>
              </div>
            </div>
          </fieldset>

          <div className="mt-[14px] flex justify-between">
            <FormButton width="w-[91px] gap-[3px] pl-[3px]" icon={<AddTaskIcon />}>ADD TASK</FormButton>
            <FormButton width="w-[71px] gap-[3px] pl-[3px]" icon={<ResetIcon />}>RESET</FormButton>
            <FormButton width="w-[119px] gap-[3px] pl-[5px]" icon={<TrashIcon />}>CLEAR THE PLAN</FormButton>
          </div>
        </div>
      </div>
    </div>
  );
}

export default function App() {
  return (
    <main className={`relative min-h-screen bg-black pt-5 ${FONT_UI}`}>
      <TitleBar />
      <RibbonTabs />
      <Ribbon />
      <FormulaBar />
      <Worksheet />
      <SheetTabs />
      <StatusBar />
      <DailyPlanDialog />
    </main>
  );
}
